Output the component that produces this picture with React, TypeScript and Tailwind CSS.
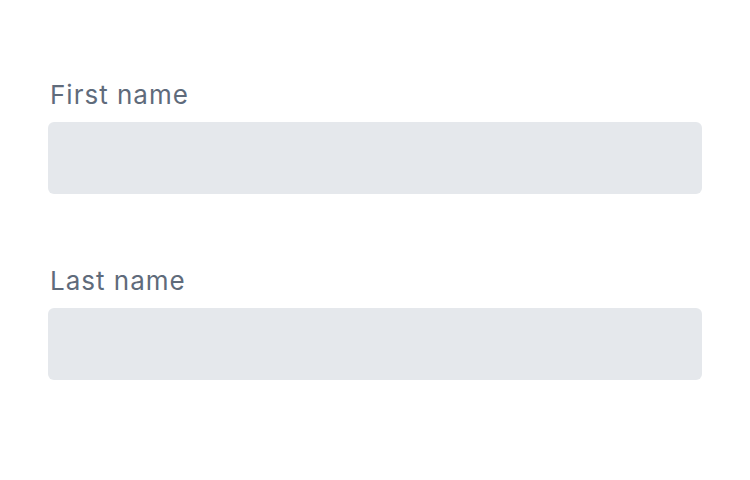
import React from "react";

export default function App() {
  return (
    <div className="min-h-screen bg-white px-12 pt-[77px] font-['Inter','Liberation_Sans',sans-serif]">
      <div className="flex flex-col gap-[69px]">
        <Field label="First name" />
        <Field label="Last name" />
      </div>
    </div>
  );
}

function Field({ label }: { label: string }) {
  return (
    <div className="flex flex-col">
      <label className="pl-[2px] text-[26px] leading-[36px] tracking-[1px] text-[#5f6b7b]">{label}</label>
      <input type="text" className="mt-[9px] h-[72px] w-full rounded-md bg-[#e5e8ec] outline-none" />
    </div>
  );
}
